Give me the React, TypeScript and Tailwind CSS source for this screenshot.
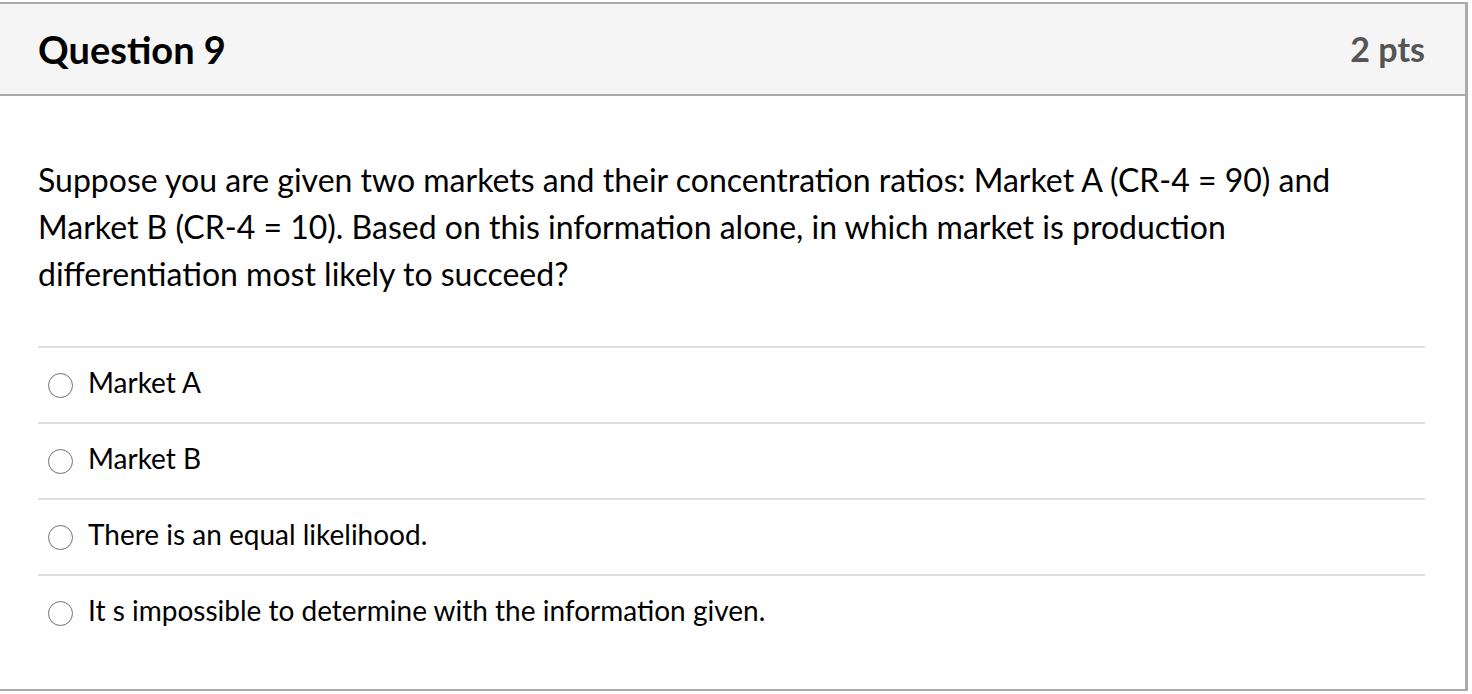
const answers = [
  "Market A",
  "Market B",
  "There is an equal likelihood.",
  "It s impossible to determine with the information given.",
];

function Radio() {
  return (
    <span className="block h-[25px] w-[25px] shrink-0 rounded-full border-[1.5px] border-[#707070] bg-white" />
  );
}

export default function App() {
  return (
    <div className="min-h-[694px] bg-white pt-[2px] font-['Lato','Noto_Sans',sans-serif] text-black">
      <div className="w-[1468px] border-y-[2px] border-r-[3px] border-[#aaaaaa]">
        <div className="flex h-[92px] items-center justify-between border-b-[2px] border-[#aaaaaa] bg-[#f5f5f5] pl-[38px] pr-[40px]">
          <h2 className="text-[38px] font-bold leading-none">Question 9</h2>
          <span className="text-[34px] font-bold leading-none text-[#555555]">2 pts</span>
        </div>
        <div className="pb-[39px] pl-[38px] pr-[40px] pt-[60px]">
          <p className="text-[32px] leading-[47px]">
            Suppose you are given two markets and their concentration ratios: Market A (CR-4 = 90) and
            <br />
            Market B (CR-4 = 10). Based on this information alone, in which market is production
            <br />
            differentiation most likely to succeed?
          </p>
          <div className="mt-[49px]">
            {answers.map((a) => (
              <div
                key={a}
                className="flex h-[76px] items-center gap-[15px] border-t-[2px] border-[#dddddd] pl-[10px]"
              >
                <Radio />
                <span className="pb-[6px] text-[28px] leading-none">{a}</span>
              </div>
            ))}
          </div>
        </div>
      </div>
    </div>
  );
}
